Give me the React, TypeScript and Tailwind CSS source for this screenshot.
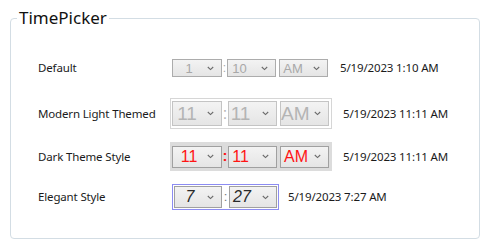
import React from "react";

const ui = "font-['Noto_Sans',sans-serif]";
const arial = "font-['Liberation_Sans',Arial,sans-serif]";

function Chevron({ color = "#6a6a6a" }: { color?: string }) {
    return (
        <svg width="7" height="5" viewBox="0 0 7 5" className="shrink-0">
            <path d="M0.8 1 L3.5 3.6 L6.2 1" fill="none" stroke={color} strokeWidth="1.1" />
        </svg>
    );
}

type BoxProps = {
    text: string;
    w: string;
    h: string;
    tw: string;
    textClass: string;
    border?: string;
};

function Box({ text, w, h, tw, textClass, border = "border-[#acacac]" }: BoxProps) {
    return (
        <div className={`${w} ${h} ${border} border bg-linear-to-b from-[#f3f3f3] to-[#e5e5e5] flex items-center`}>
            <span className={`${tw} text-center leading-none ${arial} ${textClass}`}>{text}</span>
            <span className="ml-auto mr-[7px] flex">
                <Chevron />
            </span>
        </div>
    );
}

function Row({ label, children, date, dateGap, h, mt }: { label: string; children: React.ReactNode; date: string; dateGap: string; h: string; mt: string }) {
    return (
        <div className={`flex items-center ${h} ${mt}`}>
            <div className={`w-[132px] text-[11.5px] tracking-[-0.15px] text-[#1b1b1b] ${ui}`}>{label}</div>
            {children}
            <div className={`${dateGap} text-[11.5px] tracking-[-0.15px] text-[#1b1b1b] ${ui}`}>{date}</div>
        </div>
    );
}

export default function App() {
    return (
        <div className="w-[491px] h-[248px] bg-white">
            <fieldset className="ml-[10px] mt-[6px] w-[470px] h-[233px] border border-[#d3dde4] rounded-[4px] px-[6px]">
                <legend className={`px-[2px] text-[17px] leading-[24px] text-[#111] ${ui}`}>TimePicker</legend>

                <div className="pl-[21px]">
                    <Row label="Default" date="5/19/2023 1:10 AM" dateGap="ml-[10px]" h="h-[22px]" mt="mt-[27px]">
                        <div className="flex items-center px-[2px]">
                            <Box text="1" w="w-[50px]" h="h-[18px]" tw="w-[32px]" textClass="text-[13px] text-[#a8a8a8]" />
                            <span className={`w-[5px] text-center text-[12px] text-[#a8a8a8] ${arial}`}>:</span>
                            <Box text="10" w="w-[49px]" h="h-[18px]" tw="w-[23px]" textClass="text-[13px] text-[#a8a8a8]" />
                            <div className="w-[3px]" />
                            <Box text="AM" w="w-[49px]" h="h-[18px]" tw="w-[26px]" textClass="text-[13px] text-[#a8a8a8]" />
                        </div>
                    </Row>

                    <Row label="Modern Light Themed" date="5/19/2023 11:11 AM" dateGap="ml-[11px]" h="h-[31px]" mt="mt-[19px]">
                        <div className="flex items-center w-[162px] h-[31px] border border-[#d6d6d6] px-[1px]">
                            <Box text="11" w="w-[50px]" h="h-[25px]" tw="w-[28px]" textClass="text-[19px] text-[#b4b4b4]" border="border-[#c4c4c4]" />
                            <span className={`w-[6px] text-center text-[16px] text-[#b4b4b4] ${arial}`}>:</span>
                            <Box text="11" w="w-[49px]" h="h-[25px]" tw="w-[23px]" textClass="text-[19px] text-[#b4b4b4]" border="border-[#c4c4c4]" />
                            <div className="w-[3px]" />
                            <Box text="AM" w="w-[49px]" h="h-[25px]" tw="w-[28px]" textClass="text-[19px] text-[#b4b4b4]" border="border-[#c4c4c4]" />
                        </div>
                    </Row>

                    <Row label="Dark Theme Style" date="5/19/2023 11:11 AM" dateGap="ml-[11px]" h="h-[29px]" mt="mt-[13px]">
                        <div className="flex items-center w-[162px] h-[29px] bg-[#dcdcdc] px-[2px]">
                            <Box text="11" w="w-[50px]" h="h-[22px]" tw="w-[32px]" textClass="text-[16px] text-[#ff1414]" border="border-[#a0a0a0]" />
                            <span className={`w-[6px] text-center text-[15px] font-bold text-[#ff1414] ${arial}`}>:</span>
                            <Box text="11" w="w-[49px]" h="h-[22px]" tw="w-[23px]" textClass="text-[16px] text-[#ff1414]" border="border-[#a0a0a0]" />
                            <div className="w-[3px]" />
                            <Box text="AM" w="w-[49px]" h="h-[22px]" tw="w-[30px]" textClass="text-[16px] text-[#ff1414]" border="border-[#a0a0a0]" />
                        </div>
                    </Row>

                    <Row label="Elegant Style" date="5/19/2023 7:27 AM" dateGap="ml-[9px]" h="h-[26px]" mt="mt-[13px]">
                        <div className="ml-[2px] flex items-center w-[107px] h-[26px] border border-[#8c8cf2] px-[1px]">
                            <Box text="7" w="w-[48px]" h="h-[22px]" tw="w-[30px]" textClass="text-[16px] italic text-[#2a2a2a]" border="border-[#a0a0a0]" />
                            <span className={`w-[7px] text-center text-[13px] text-[#777] ${arial}`}>:</span>
                            <Box text="27" w="w-[48px]" h="h-[22px]" tw="w-[24px]" textClass="text-[16px] italic text-[#2a2a2a]" border="border-[#a0a0a0]" />
                        </div>
                    </Row>
                </div>
            </fieldset>
        </div>
    );
}
